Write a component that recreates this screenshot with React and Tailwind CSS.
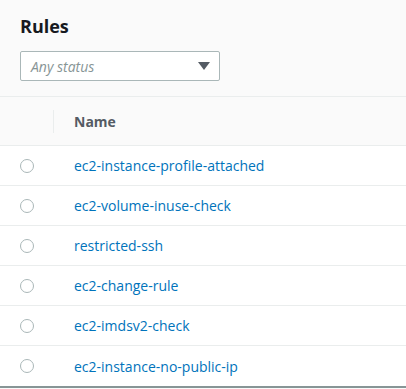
const RULES = [
  'ec2-instance-profile-attached',
  'ec2-volume-inuse-check',
  'restricted-ssh',
  'ec2-change-rule',
  'ec2-imdsv2-check',
  'ec2-instance-no-public-ip',
];

export default function App() {
  return (
    <div className="w-[406px] h-[389px] bg-[#fafafa] overflow-hidden" style={{ fontFamily: '"Open Sans", "Noto Sans", Arial, sans-serif' }}>
      {/* Header */}
      <div className="px-5 pt-[13px] pb-[15px] border-b border-[#eaeded]">
        <h2 className="text-[18px] leading-[26px] font-bold text-[#16191f]">Rules</h2>
        <div className="mt-[12px] w-[200px] h-[30px] bg-white border border-[#aab7b8] rounded-[2px] flex items-center justify-between pl-[10px] pr-[9px]">
          <span className="text-[14px] italic text-[#879596]">Any status</span>
          <svg width="12" height="8" viewBox="0 0 12 8">
            <path d="M0 0 H12 L6 8 Z" fill="#545b64" />
          </svg>
        </div>
      </div>

      {/* Table */}
      <div className="bg-white border-b-2 border-[#879596]">
        <div className="h-[49px] bg-[#fafafa] border-b border-[#eaeded] flex items-center">
          <div className="w-[54px] h-[23px] border-r border-[#eaeded]" />
          <span className="pl-5 text-[14px] font-bold text-[#545b64]">Name</span>
        </div>
        {RULES.map((name, i) => (
          <div
            key={name}
            className={`h-[40px] flex items-center ${i < RULES.length - 1 ? 'border-b border-[#eaeded]' : ''}`}
          >
            <div className="w-[54px] flex justify-center pr-[1px]">
              <span className="w-[14px] h-[14px] rounded-full border border-[#aab7b8] bg-white" />
            </div>
            <a className="pl-5 text-[14px] text-[#0073bb]">{name}</a>
          </div>
        ))}
      </div>
    </div>
  );
}
